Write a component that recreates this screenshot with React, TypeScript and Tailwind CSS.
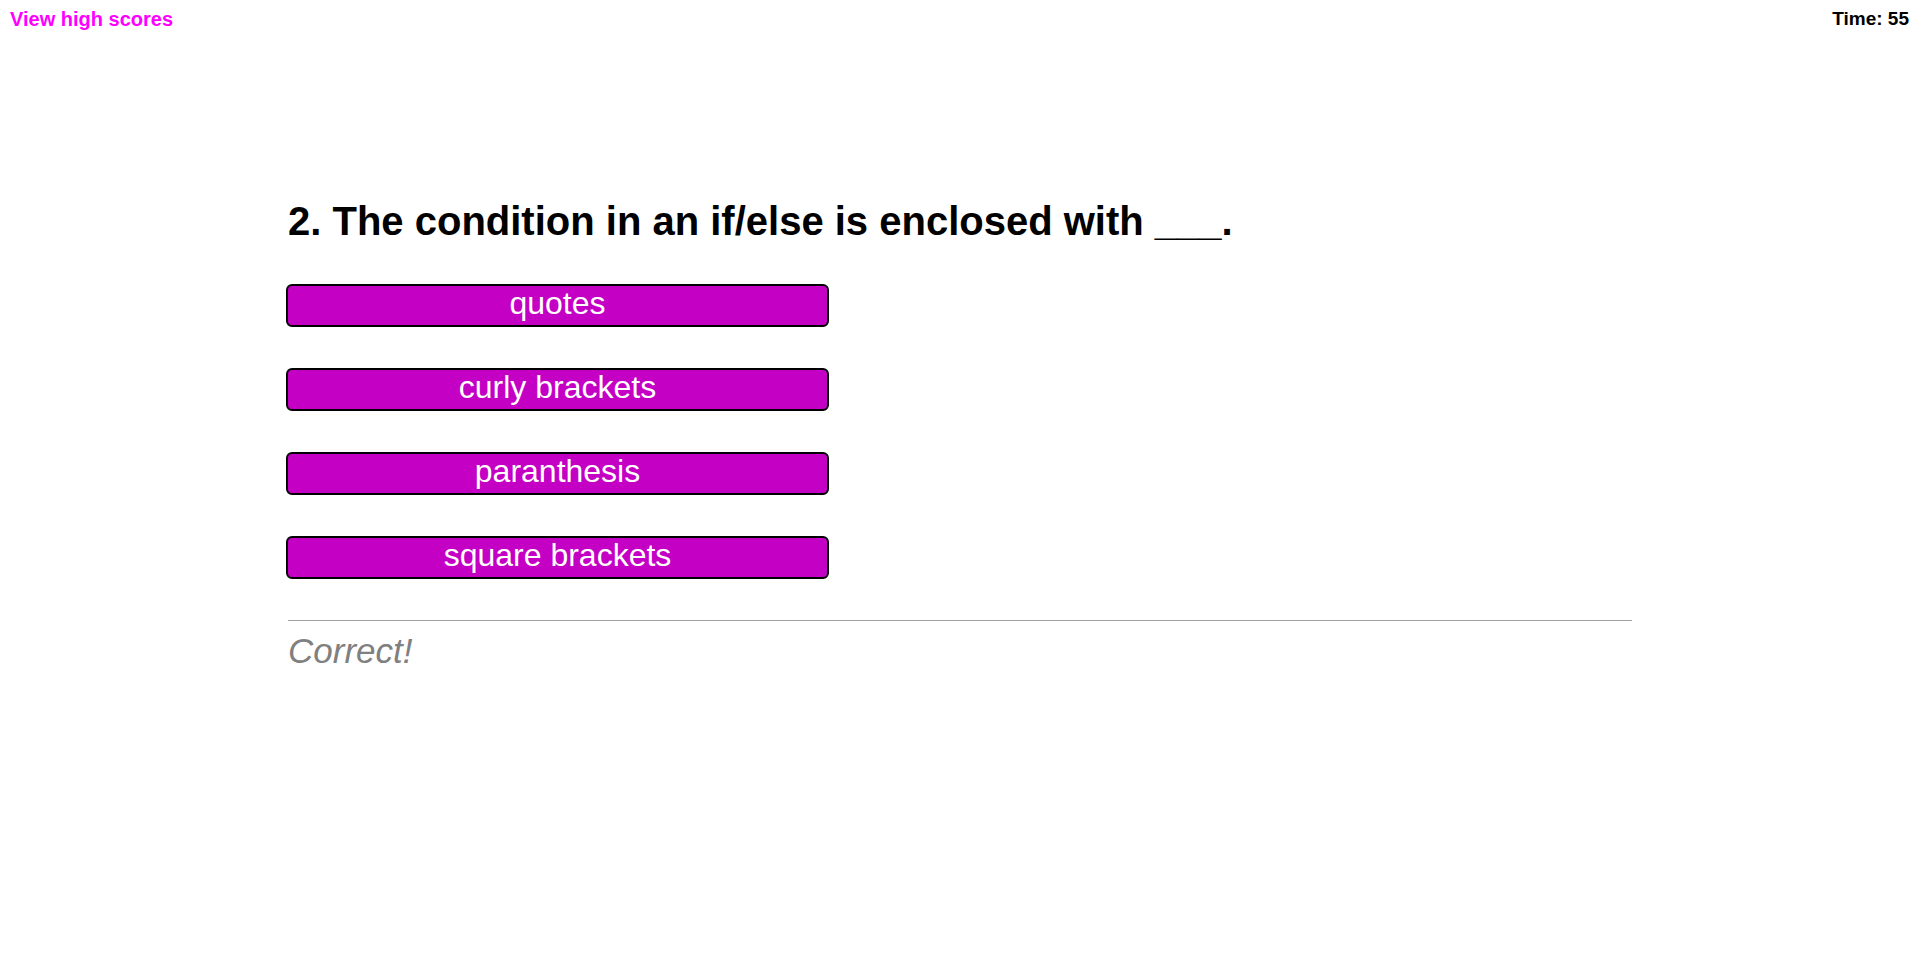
const choices = ['quotes', 'curly brackets', 'paranthesis', 'square brackets'];

export default function App() {
  return (
    <div className="min-h-screen bg-white font-['Liberation_Sans',Arial,sans-serif] text-black">
      {/* barra de cima */}
      <header className="flex items-start justify-between pt-[9px] pl-[10px] pr-[11px]">
        <a className="text-[20px] leading-[20px] font-bold text-[#ff00ff] cursor-pointer">View high scores</a>
        <span className="text-[19px] leading-[19px] font-bold">Time: 55</span>
      </header>

      <main className="ml-[15%] w-[70%] pt-[169px]">
        <h1 className="text-[40px] leading-[46px] font-bold">2. The condition in an if/else is enclosed with ___.</h1>

        <div className="mt-[40px] -ml-0.5 flex flex-col gap-[41px]">
          {choices.map((c) => (
            <button
              key={c}
              className="h-[43px] w-[543px] rounded-md border-2 border-black bg-[#c400c4] pb-[5px] text-[32px] leading-[30px] text-white"
            >
              {c}
            </button>
          ))}
        </div>

        <div className="mt-[41px] h-px bg-[#a0a0a0]" />
        <p className="mt-[10px] text-[35px] leading-[40px] italic text-[#808080]">Correct!</p>
      </main>
    </div>
  );
}
